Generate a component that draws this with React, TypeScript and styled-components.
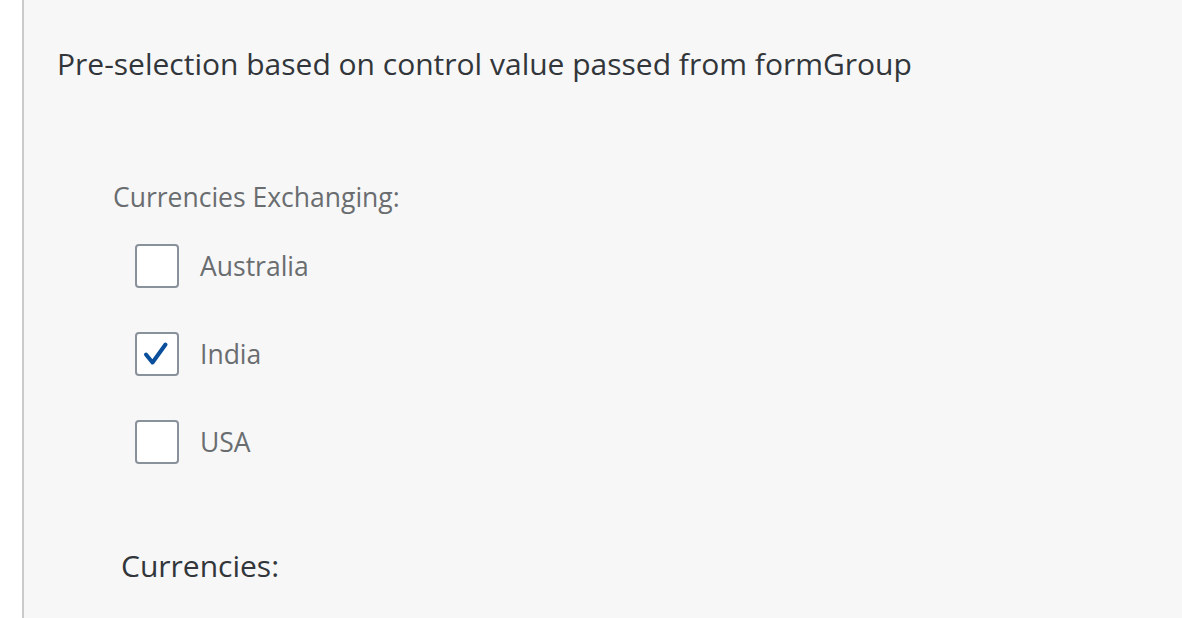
import { FC } from 'react'
import styled, { createGlobalStyle } from 'styled-components'

const GlobalStyle = createGlobalStyle`
  html, body {
    margin: 0;
    padding: 0;
    background: #ffffff;
    font-family: "Open Sans", "Noto Sans", Arial, sans-serif;
  }
`

interface ICountry {
  name: string
  checked: boolean
}

const countries: ICountry[] = [
  { name: 'Australia', checked: false },
  { name: 'India', checked: true },
  { name: 'USA', checked: false }
]

const CheckMark: FC = () => (
  <svg width="40" height="40" viewBox="0 0 40 40">
    <path
      d="M9 20.5 L15.5 28.5 L28.5 10.5"
      fill="none"
      stroke="#0a4f9c"
      strokeWidth="4"
      strokeLinecap="round"
      strokeLinejoin="round"
    />
  </svg>
)

const App: FC = () => {
  return (
    <>
      <GlobalStyle />
      <Page>
        <Panel>
          <Title>Pre-selection based on control value passed from formGroup</Title>
          <Group>
            <GroupLabel>Currencies Exchanging:</GroupLabel>
            <List>
              {countries.map(c => (
                <Row key={c.name}>
                  <Box>{c.checked && <CheckMark />}</Box>
                  <RowLabel>{c.name}</RowLabel>
                </Row>
              ))}
            </List>
          </Group>
          <SubTitle>Currencies:</SubTitle>
        </Panel>
      </Page>
    </>
  )
}

const Page = styled.div`
  height: 618px;
  overflow: hidden;
  padding-left: 22px;
`

const Panel = styled.div`
  min-height: 100%;
  background: #f7f7f7;
  border-left: 2px solid #cacaca;
  padding: 43px 0 0 33px;
  box-sizing: border-box;
`

const Title = styled.div`
  font-size: 30px;
  line-height: 42px;
  color: #32363a;
`

const Group = styled.div`
  margin-top: 96px;
  padding-left: 56px;
`

const GroupLabel = styled.div`
  font-size: 26.5px;
  line-height: 32px;
  color: #6a6d70;
`

const List = styled.div`
  display: flex;
  flex-direction: column;
  gap: 44px;
  margin-top: 31px;
  padding-left: 22px;
`

const Row = styled.div`
  display: flex;
  align-items: center;
  gap: 21px;
`

const Box = styled.div`
  width: 44px;
  height: 44px;
  box-sizing: border-box;
  border: 2px solid #89919a;
  border-radius: 4px;
  background: #ffffff;
  display: flex;
  align-items: center;
  justify-content: center;
`

const RowLabel = styled.span`
  font-size: 26.5px;
  color: #6a6d70;
`

const SubTitle = styled.div`
  margin-top: 82px;
  padding-left: 64px;
  font-size: 30px;
  line-height: 40px;
  color: #32363a;
`

export default App
